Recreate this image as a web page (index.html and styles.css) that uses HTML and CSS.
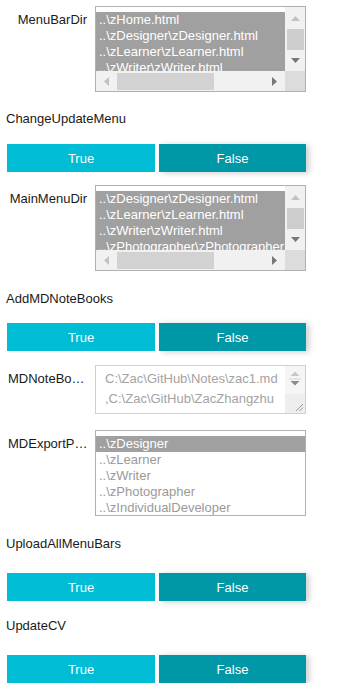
FILE: index.html
```html
<!DOCTYPE html>
<html>
<head>
<meta charset="utf-8">
<link rel="stylesheet" href="styles.css">
</head>
<body>
<div class="page">

  <div class="field">
    <div class="label">MenuBarDir</div>
    <div class="listbox listbox--scroll">
      <div class="lb-view">
        <div class="lb-rows">
          <div class="opt opt--sel">..\zHome.html</div>
          <div class="opt opt--sel">..\zDesigner\zDesigner.html</div>
          <div class="opt opt--sel">..\zLearner\zLearner.html</div>
          <div class="opt opt--sel">..\zWriter\zWriter.html</div>
        </div>
      </div>
      <div class="vbar">
        <div class="sb-btn"><svg width="9" height="5" viewBox="0 0 9 5"><path d="M0 5L4.5 0L9 5Z" fill="#c2c2c2"/></svg></div>
        <div class="vthumb"></div>
        <div class="sb-btn"><svg width="9" height="5" viewBox="0 0 9 5"><path d="M0 0L4.5 5L9 0Z" fill="#777"/></svg></div>
      </div>
      <div class="hbar">
        <div class="sb-btn"><svg width="5" height="9" viewBox="0 0 5 9"><path d="M5 0L0 4.5L5 9Z" fill="#c2c2c2"/></svg></div>
        <div class="hthumb"></div>
        <div></div>
        <div class="sb-btn"><svg width="5" height="9" viewBox="0 0 5 9"><path d="M0 0L5 4.5L0 9Z" fill="#777"/></svg></div>
      </div>
      <div class="corner"></div>
    </div>
  </div>

  <div class="heading h1">ChangeUpdateMenu</div>
  <div class="toggle t1">
    <button class="btn btn--true">True</button>
    <button class="btn btn--false">False</button>
  </div>

  <div class="field f2">
    <div class="label">MainMenuDir</div>
    <div class="listbox listbox--scroll">
      <div class="lb-view">
        <div class="lb-rows">
          <div class="opt opt--sel">..\zDesigner\zDesigner.html</div>
          <div class="opt opt--sel">..\zLearner\zLearner.html</div>
          <div class="opt opt--sel">..\zWriter\zWriter.html</div>
          <div class="opt opt--sel">..\zPhotographer\zPhotographer.html</div>
        </div>
      </div>
      <div class="vbar">
        <div class="sb-btn"><svg width="9" height="5" viewBox="0 0 9 5"><path d="M0 5L4.5 0L9 5Z" fill="#c2c2c2"/></svg></div>
        <div class="vthumb"></div>
        <div class="sb-btn"><svg width="9" height="5" viewBox="0 0 9 5"><path d="M0 0L4.5 5L9 0Z" fill="#777"/></svg></div>
      </div>
      <div class="hbar">
        <div class="sb-btn"><svg width="5" height="9" viewBox="0 0 5 9"><path d="M5 0L0 4.5L5 9Z" fill="#c2c2c2"/></svg></div>
        <div class="hthumb"></div>
        <div></div>
        <div class="sb-btn"><svg width="5" height="9" viewBox="0 0 5 9"><path d="M0 0L5 4.5L0 9Z" fill="#777"/></svg></div>
      </div>
      <div class="corner"></div>
    </div>
  </div>

  <div class="heading h2">AddMDNoteBooks</div>
  <div class="toggle t2">
    <button class="btn btn--true">True</button>
    <button class="btn btn--false">False</button>
  </div>

  <div class="field f3">
    <div class="label">MDNoteBooks</div>
    <div class="textarea">
      <div class="ta-text">
        <div class="ta-line">C:\Zac\GitHub\Notes\zac1.md</div>
        <div class="ta-line">,C:\Zac\GitHub\ZacZhangzhu</div>
      </div>
      <div class="ta-bar">
        <svg width="20" height="47" viewBox="0 0 20 47">
          <rect x="0" y="0" width="20" height="47" fill="#f5f5f5"/>
          <rect x="0" y="28" width="20" height="19" fill="#eeeeee"/>
          <path d="M5.5 10L10 5.5L14.5 10Z" fill="#c8c8c8"/>
          <rect x="4" y="12.5" width="12" height="1" fill="#d6d6d6"/>
          <path d="M5.5 15L10 19.5L14.5 15Z" fill="#8a8a8a"/>
          <path d="M11 45L18 38M14.5 45L18 41.5" stroke="#9a9a9a" stroke-width="1"/>
        </svg>
      </div>
    </div>
  </div>

  <div class="field f4">
    <div class="label">MDExportPaths</div>
    <div class="listbox listbox--plain">
      <div class="opt opt--sel">..\zDesigner</div>
      <div class="opt">..\zLearner</div>
      <div class="opt">..\zWriter</div>
      <div class="opt">..\zPhotographer</div>
      <div class="opt">..\zIndividualDeveloper</div>
    </div>
  </div>

  <div class="heading h3">UploadAllMenuBars</div>
  <div class="toggle t3">
    <button class="btn btn--true">True</button>
    <button class="btn btn--false">False</button>
  </div>

  <div class="heading h4">UpdateCV</div>
  <div class="toggle t4">
    <button class="btn btn--true">True</button>
    <button class="btn btn--false">False</button>
  </div>

</div>
</body>
</html>
```

FILE: styles.css
```css
* { box-sizing: border-box; }
html, body { margin: 0; padding: 0; background: #fff; }
body {
  font-family: "Liberation Sans", Arial, sans-serif;
  font-size: 13px;
  line-height: 16px;
  color: #1a1a1a;
}
.page {
  width: 342px;
  padding: 6px 0 0 7px;
}

.field {
  display: flex;
  gap: 6px;
  align-items: flex-start;
}
.f2 { margin-top: 13px; }
.f3 { margin-top: 14px; }
.f4 { margin-top: 16px; }

.label {
  width: 82px;
  flex: none;
  padding-top: 6px;
  padding-right: 2px;
  text-align: right;
  white-space: nowrap;
  overflow: hidden;
  text-overflow: ellipsis;
}
.f3 .label, .f4 .label { text-align: left; padding-left: 1px; padding-right: 0; }

.listbox {
  width: 211px;
  height: 86px;
  border: 1px solid #b0b0b0;
  background: #fff;
  flex: none;
}
.listbox--scroll {
  display: grid;
  grid-template-columns: 189px 20px;
  grid-template-rows: 64px 20px;
}
.lb-view {
  overflow: hidden;
  padding-top: 5px;
  background: #fff;
}
.lb-rows { width: 260px; }
.listbox--plain { padding-top: 5px; overflow: hidden; }

.opt {
  height: 16px;
  line-height: 16px;
  padding-left: 3px;
  white-space: nowrap;
  color: #9a9a9a;
}
.opt--sel {
  background: #a0a0a0;
  color: #fff;
}

.vbar {
  background: #f1f1f1;
  display: grid;
  grid-template-rows: 22px 21px 1fr;
  justify-items: center;
}
.vbar .sb-btn { display: flex; align-items: center; justify-content: center; width: 100%; }
.vthumb {
  width: 17px;
  height: 21px;
  background: #cdcdcd;
}
.hbar {
  background: #f1f1f1;
  display: grid;
  grid-template-columns: 21px 97px 1fr 21px;
  align-items: center;
}
.hbar .sb-btn { display: flex; align-items: center; justify-content: center; height: 100%; }
.hthumb {
  height: 17px;
  background: #d2d2d2;
}
.corner { background: #dcdcdc; }

.textarea {
  width: 211px;
  height: 49px;
  border: 1px solid #cfcfcf;
  display: flex;
  flex: none;
  background: #fff;
}
.ta-text {
  flex: 1;
  padding: 3px 0 0 9px;
  color: #a3a3a3;
  line-height: 20px;
  overflow: hidden;
  white-space: nowrap;
}
.ta-bar { width: 20px; flex: none; display: flex; }

.heading { height: 16px; white-space: nowrap; margin-left: -1px; }
.h1 { margin-top: 19px; }
.h2 { margin-top: 20px; }
.h3 { margin-top: 20px; }
.h4 { margin-top: 17px; }

.toggle {
  display: grid;
  grid-template-columns: 148px 147px;
  column-gap: 4px;
}
.t1 { margin-top: 17px; }
.t2 { margin-top: 16px; }
.t3 { margin-top: 21px; }
.t4 { margin-top: 21px; }

.btn {
  height: 28px;
  border: 0;
  margin: 0;
  padding: 0;
  font-family: "Liberation Sans", Arial, sans-serif;
  font-size: 13px;
  color: #fff;
  cursor: pointer;
}
.btn--true { background: #00bcd4; }
.btn--false {
  background: #0097a7;
  box-shadow: 3px 1px 6px rgba(0, 0, 0, 0.2);
}
```
